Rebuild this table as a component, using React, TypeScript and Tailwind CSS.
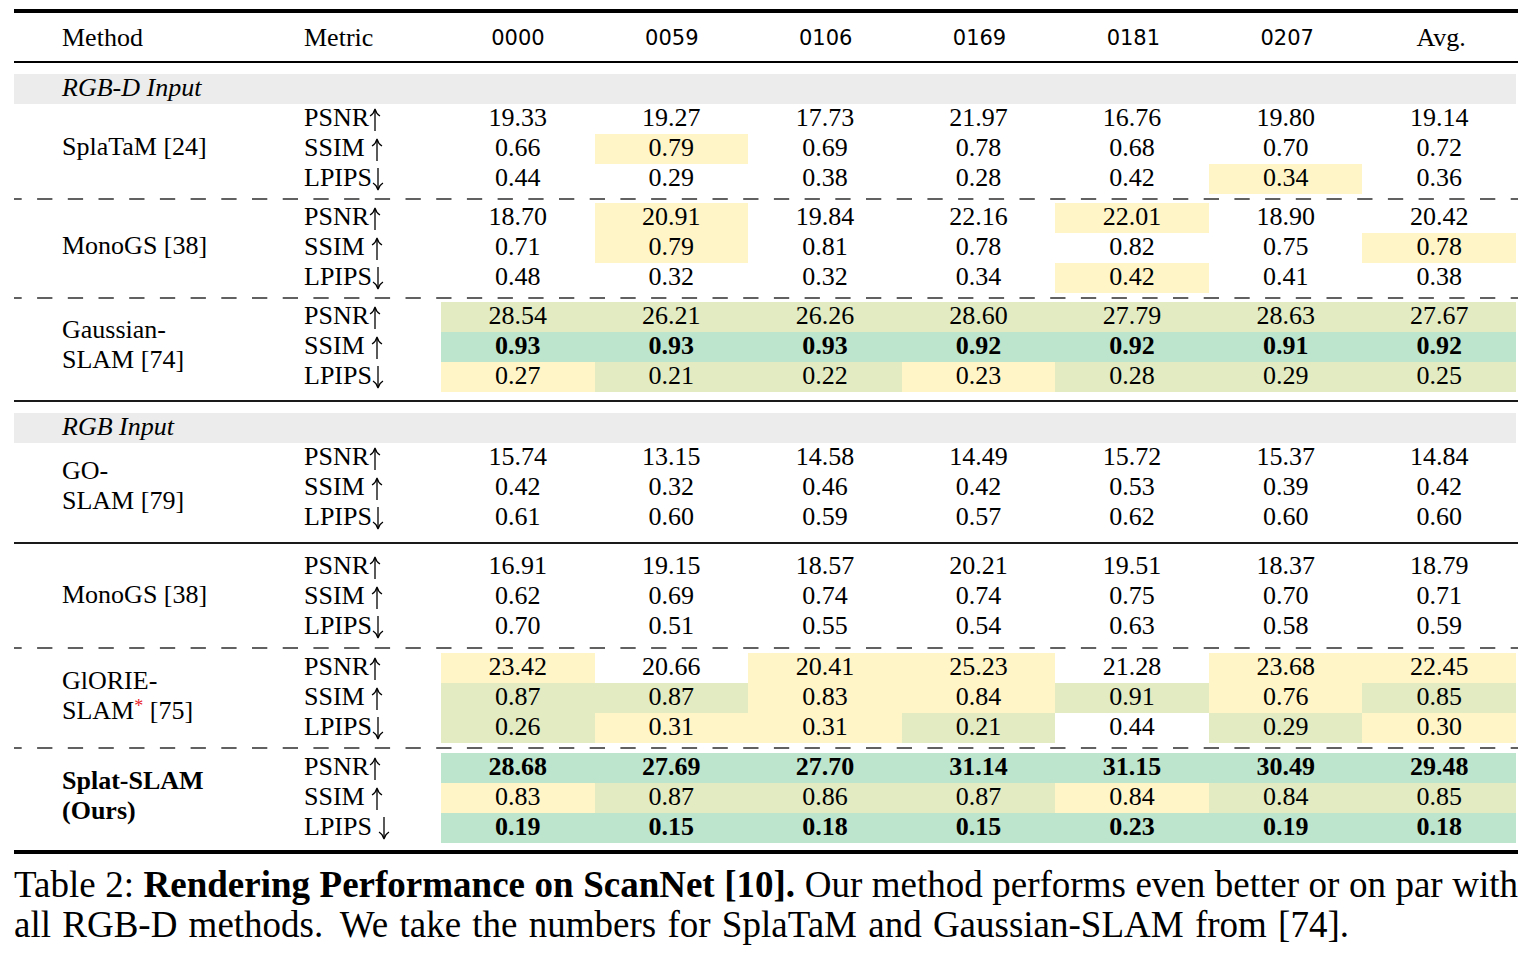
import React from 'react';

// cell colours used by the paper for 1st / 2nd / 3rd
const bgFor: Record<string, string> = {
    t: 'bg-[#bde4cd]',
    g: 'bg-[#e2ebc1]',
    y: 'bg-[#fff5c7]',
    '-': '',
};

type Row = {
    metric: string;
    arrow: 'up' | 'down';
    gap?: boolean; // space before the arrow
    values: string[];
    colors: string; // one char per column: t, g, y or -
    bold?: boolean;
};

type Group = {
    name: React.ReactNode;
    rows: Row[];
};

const scenes = ['0000', '0059', '0106', '0169', '0181', '0207'];

const splatam: Group = {
    name: <span>SplaTaM [24]</span>,
    rows: [
        { metric: 'PSNR', arrow: 'up', values: ['19.33', '19.27', '17.73', '21.97', '16.76', '19.80', '19.14'], colors: '-------' },
        { metric: 'SSIM', arrow: 'up', gap: true, values: ['0.66', '0.79', '0.69', '0.78', '0.68', '0.70', '0.72'], colors: '-y-----' },
        { metric: 'LPIPS', arrow: 'down', values: ['0.44', '0.29', '0.38', '0.28', '0.42', '0.34', '0.36'], colors: '-----y-' },
    ],
};

const monogsD: Group = {
    name: <span>MonoGS [38]</span>,
    rows: [
        { metric: 'PSNR', arrow: 'up', values: ['18.70', '20.91', '19.84', '22.16', '22.01', '18.90', '20.42'], colors: '-y--y--' },
        { metric: 'SSIM', arrow: 'up', gap: true, values: ['0.71', '0.79', '0.81', '0.78', '0.82', '0.75', '0.78'], colors: '-y----y' },
        { metric: 'LPIPS', arrow: 'down', values: ['0.48', '0.32', '0.32', '0.34', '0.42', '0.41', '0.38'], colors: '----y--' },
    ],
};

const gaussian: Group = {
    name: (
        <span>
            Gaussian-
            <br />
            SLAM [74]
        </span>
    ),
    rows: [
        { metric: 'PSNR', arrow: 'up', values: ['28.54', '26.21', '26.26', '28.60', '27.79', '28.63', '27.67'], colors: 'ggggggg' },
        { metric: 'SSIM', arrow: 'up', gap: true, values: ['0.93', '0.93', '0.93', '0.92', '0.92', '0.91', '0.92'], colors: 'ttttttt', bold: true },
        { metric: 'LPIPS', arrow: 'down', values: ['0.27', '0.21', '0.22', '0.23', '0.28', '0.29', '0.25'], colors: 'yggyggg' },
    ],
};

const goslam: Group = {
    name: (
        <span>
            GO-
            <br />
            SLAM [79]
        </span>
    ),
    rows: [
        { metric: 'PSNR', arrow: 'up', values: ['15.74', '13.15', '14.58', '14.49', '15.72', '15.37', '14.84'], colors: '-------' },
        { metric: 'SSIM', arrow: 'up', gap: true, values: ['0.42', '0.32', '0.46', '0.42', '0.53', '0.39', '0.42'], colors: '-------' },
        { metric: 'LPIPS', arrow: 'down', values: ['0.61', '0.60', '0.59', '0.57', '0.62', '0.60', '0.60'], colors: '-------' },
    ],
};

const monogs: Group = {
    name: <span>MonoGS [38]</span>,
    rows: [
        { metric: 'PSNR', arrow: 'up', values: ['16.91', '19.15', '18.57', '20.21', '19.51', '18.37', '18.79'], colors: '-------' },
        { metric: 'SSIM', arrow: 'up', gap: true, values: ['0.62', '0.69', '0.74', '0.74', '0.75', '0.70', '0.71'], colors: '-------' },
        { metric: 'LPIPS', arrow: 'down', values: ['0.70', '0.51', '0.55', '0.54', '0.63', '0.58', '0.59'], colors: '-------' },
    ],
};

const glorie: Group = {
    name: (
        <span>
            GlORIE-
            <br />
            SLAM
            <span className="relative top-[-7px] text-[18px] leading-none text-[#e8202a]">*</span> [75]
        </span>
    ),
    rows: [
        { metric: 'PSNR', arrow: 'up', values: ['23.42', '20.66', '20.41', '25.23', '21.28', '23.68', '22.45'], colors: 'y-yy-yy' },
        { metric: 'SSIM', arrow: 'up', gap: true, values: ['0.87', '0.87', '0.83', '0.84', '0.91', '0.76', '0.85'], colors: 'ggyygyg' },
        { metric: 'LPIPS', arrow: 'down', values: ['0.26', '0.31', '0.31', '0.21', '0.44', '0.29', '0.30'], colors: 'gyyg-gy' },
    ],
};

const ours: Group = {
    name: (
        <span className="font-bold">
            Splat-SLAM
            <br />
            (Ours)
        </span>
    ),
    rows: [
        { metric: 'PSNR', arrow: 'up', values: ['28.68', '27.69', '27.70', '31.14', '31.15', '30.49', '29.48'], colors: 'ttttttt', bold: true },
        { metric: 'SSIM', arrow: 'up', gap: true, values: ['0.83', '0.87', '0.86', '0.87', '0.84', '0.84', '0.85'], colors: 'ygggygg' },
        { metric: 'LPIPS', arrow: 'down', gap: true, values: ['0.19', '0.15', '0.18', '0.15', '0.23', '0.19', '0.18'], colors: 'ttttttt', bold: true },
    ],
};

const gridCols = 'grid grid-cols-[276px_151px_repeat(7,minmax(0,1fr))]';

// tall thin math arrow, as in \uparrow / \downarrow
const Arrow = ({ dir }: { dir: 'up' | 'down' }) => (
    <svg
        width="12"
        height="23"
        viewBox="0 0 12 23"
        className={`inline-block align-[-5px] ${dir === 'down' ? 'rotate-180' : ''}`}
    >
        <path d="M6 2 V23" stroke="#000" strokeWidth="1.3" fill="none" />
        <path d="M1 8 C3.6 6.4 5.2 4.4 6 1 C6.8 4.4 8.4 6.4 11 8" stroke="#000" strokeWidth="1.2" fill="none" />
    </svg>
);

const Header = () => (
    <div className={`${gridCols} h-[48px] items-center text-[26px]`}>
        <div className="pl-[48px]">Method</div>
        <div className="pl-[14px]">Metric</div>
        {scenes.map((s) => (
            <div key={s} className="pt-[3px] text-center font-['DejaVu_Sans',sans-serif] text-[21px]">
                {s}
            </div>
        ))}
        <div className="text-center">Avg.</div>
    </div>
);

const Band = ({ label }: { label: string }) => (
    <div className="mr-[2px] h-[30px] bg-[#ececec] pl-[48px] text-[26px] italic leading-[27px]">{label}</div>
);

const GroupRows = ({ group }: { group: Group }) => (
    <div className={`${gridCols} mr-[2px] grid-rows-[30px_30px_30px] text-[26px]`}>
        <div className="row-span-3 flex items-center pb-[4px] pl-[48px] leading-[30px]">{group.name}</div>
        {group.rows.map((row) => (
            <React.Fragment key={row.metric}>
                <div className="h-[30px] whitespace-nowrap pl-[14px] leading-[27px]">
                    {row.metric}
                    {row.gap ? <span className="inline-block w-[6px]" /> : null}
                    <Arrow dir={row.arrow} />
                </div>
                {row.values.map((v, i) => (
                    <div
                        key={i}
                        className={`h-[30px] text-center leading-[27px] ${bgFor[row.colors[i]]} ${
                            row.bold ? 'font-bold' : ''
                        }`}
                    >
                        {v}
                    </div>
                ))}
            </React.Fragment>
        ))}
    </div>
);

const Dashed = ({ className }: { className: string }) => (
    <div className={`flex items-center ${className}`}>
        <svg className="block h-[2px] w-full" preserveAspectRatio="none">
            <line
                x1="0"
                y1="1"
                x2="100%"
                y2="1"
                stroke="#2e2e2e"
                strokeWidth="1.6"
                strokeDasharray="15.3 15.4"
                strokeDashoffset="7.6"
            />
        </svg>
    </div>
);

const App = () => {
    return (
        <div className="min-h-screen bg-white font-['Liberation_Serif',serif] text-black">
            <div className="ml-[14px] w-[1504px] pt-[9px]">
                <div className="h-[4px] bg-black" />
                <Header />
                <div className="h-[2px] bg-black" />
                <div className="h-[11px]" />

                <Band label="RGB-D Input" />
                <GroupRows group={splatam} />
                <Dashed className="h-[9px]" />
                <GroupRows group={monogsD} />
                <Dashed className="h-[9px]" />
                <GroupRows group={gaussian} />
                <div className="pb-[11px] pt-[8px]">
                    <div className="h-[2px] bg-[#1a1a1a]" />
                </div>

                <Band label="RGB Input" />
                <GroupRows group={goslam} />
                <div className="pb-[8px] pt-[9px]">
                    <div className="h-[2px] bg-[#1a1a1a]" />
                </div>
                <GroupRows group={monogs} />
                <Dashed className="h-[11px]" />
                <GroupRows group={glorie} />
                <Dashed className="h-[10px]" />
                <GroupRows group={ours} />
                <div className="pt-[7px]">
                    <div className="h-[4px] bg-black" />
                </div>

                {/* Caption */}
                <div className="mt-[11px] text-[37px] leading-[40px]">
                    <div className="whitespace-nowrap [text-align-last:justify]">
                        Table 2: <span className="font-bold">Rendering Performance on ScanNet [10].</span> Our method
                        performs even better or on par with
                    </div>
                    <div className="whitespace-nowrap [word-spacing:2px]">
                        all RGB-D <span className="mr-[6px]">methods.</span> We take the numbers for SplaTaM and
                        Gaussian-SLAM from [74].
                    </div>
                </div>
            </div>
        </div>
    );
};

export default App;
